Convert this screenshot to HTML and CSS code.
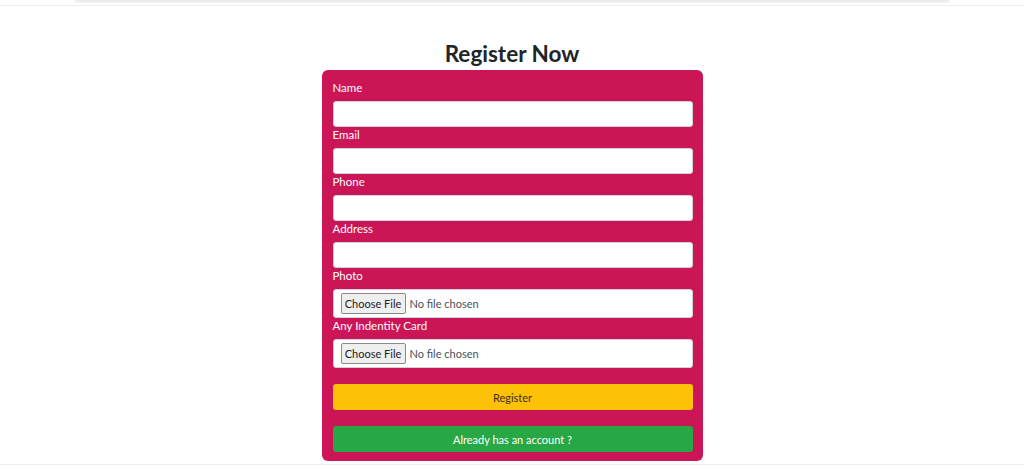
FILE: index.html
```html
<!DOCTYPE html>
<html lang="en">
<head>
<meta charset="utf-8">
<title>Register Now</title>
<link rel="stylesheet" href="styles.css">
</head>
<body>
<header class="topbar"><div class="topbar-inner"></div></header>
<main class="page">
  <h1 class="title">Register Now</h1>
  <form class="card">
    <label class="label" for="name">Name</label>
    <input class="control" id="name" type="text">
    <label class="label" for="email">Email</label>
    <input class="control" id="email" type="email">
    <label class="label" for="phone">Phone</label>
    <input class="control" id="phone" type="text">
    <label class="label" for="address">Address</label>
    <input class="control" id="address" type="text">
    <label class="label" for="photo">Photo</label>
    <input class="control file" id="photo" type="file">
    <label class="label" for="card">Any Indentity Card</label>
    <input class="control file" id="card" type="file">
    <button class="btn btn-register" type="button">Register</button>
    <button class="btn btn-login" type="button">Already has an account ?</button>
  </form>
</main>
<footer class="bottomline"></footer>
</body>
</html>
```
FILE: styles.css
```css
* { box-sizing: border-box; }
html, body { margin: 0; padding: 0; background: #fff; }
body {
  font-family: Lato, "Open Sans", "Liberation Sans", sans-serif;
  color: #212529;
  height: 469px;
  overflow: hidden;
}
.topbar {
  height: 6px;
  border-bottom: 1px solid #eeeeee;
  display: flex;
  justify-content: center;
}
.topbar-inner {
  width: 875px;
  height: 2px;
  background: #ececec;
  border-radius: 0 0 4px 4px;
  box-shadow: 0 1px 2px rgba(0,0,0,0.06);
  margin-left: 1px;
}
.page {
  display: flex;
  flex-direction: column;
  align-items: center;
  height: 458px;
}
.title {
  margin: 32px 0 0;
  font-size: 22.5px;
  line-height: 32px;
  font-weight: 700;
  color: #212529;
}
.card {
  width: 381px;
  background: #cb1557;
  border-radius: 6px;
  padding: 10px 10px 9px 11px;
  display: flex;
  flex-direction: column;
}
.label {
  color: #fff;
  font-size: 11.5px;
  line-height: 15px;
  margin-bottom: 6px;
}
.control {
  width: 360px;
  height: 26px;
  border: 1px solid #ced4da;
  border-radius: 3px;
  background: #fff;
  font-family: inherit;
  font-size: 11px;
  padding: 0 8px;
}
.control.file {
  height: 29px;
  padding: 3px 7px;
  color: #495057;
  font-size: 11px;
}
.control.file::file-selector-button {
  font-family: inherit;
  font-size: 11px;
  height: 21px;
  width: 65px;
  padding: 0;
  margin-right: 4px;
  border: 1px solid #8a8a8a;
  border-radius: 2px;
  background: #efefef;
  color: #222;
}
.btn {
  width: 360px;
  height: 26px;
  border: none;
  border-radius: 3px;
  font-family: inherit;
  font-size: 11px;
  cursor: pointer;
}
.btn-register {
  margin-top: 16px;
  background: #ffc107;
  color: #3b2f12;
}
.btn-login {
  margin-top: 16px;
  background: #28a745;
  color: #fff;
}
.bottomline {
  border-top: 1px solid #eeeeee;
}
```
